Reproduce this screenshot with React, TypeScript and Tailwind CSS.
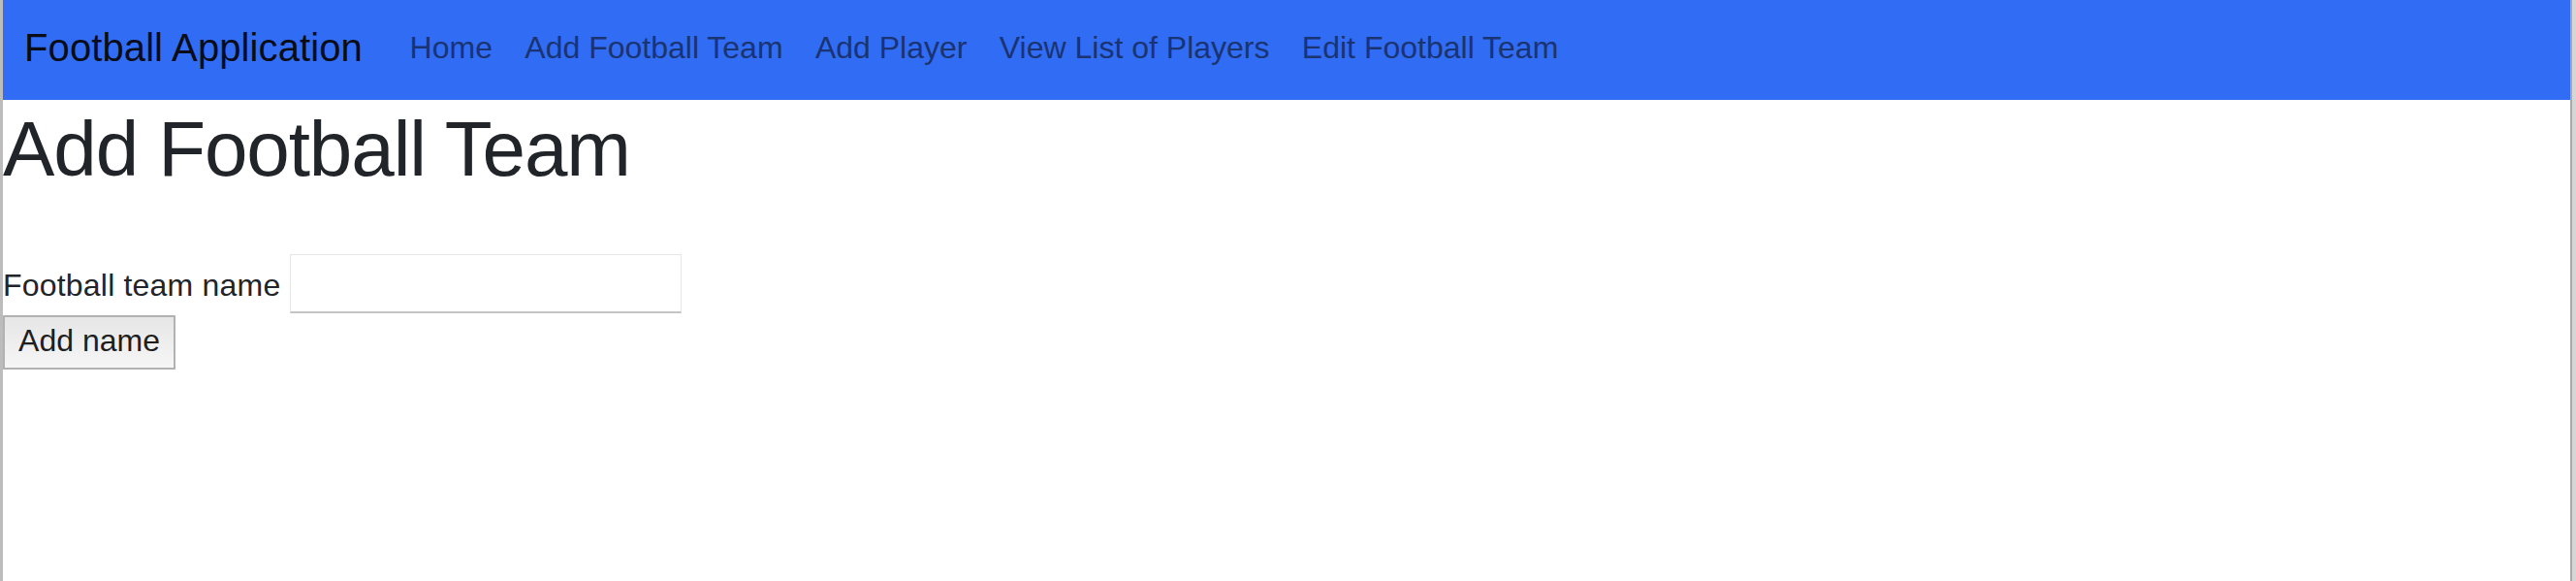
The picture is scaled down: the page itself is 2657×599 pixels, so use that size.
import { useState } from 'react'

const navLinks = ['Home', 'Add Football Team', 'Add Player', 'View List of Players', 'Edit Football Team']

function NavBar() {
  return (
    <nav className="flex h-[103px] items-center bg-[#316cf4] pb-[5px] pl-[22px]">
      <a className="mr-[32px] text-[40px] leading-none tracking-[0.1px] text-[#0a0d18]" href="#">
        Football Application
      </a>
      <ul className="flex items-center">
        {navLinks.map(link => (
          <li key={link}>
            <a className="block px-[16.7px] text-[32px] leading-none text-[#1a3371]" href="#">
              {link}
            </a>
          </li>
        ))}
      </ul>
    </nav>
  )
}

function AddTeamForm() {
  const [name, setName] = useState('')

  return (
    <form onSubmit={e => e.preventDefault()}>
      <div className="mt-[60px] flex h-[61px] items-center gap-[10px]">
        <label htmlFor="teamName" className="mt-[3px] text-[32px] leading-none tracking-[0.2px] text-[#212529]">
          Football team name
        </label>
        <input
          id="teamName"
          value={name}
          onChange={e => setName(e.target.value)}
          className="h-[61px] w-[404px] border border-[#e6e6e6] border-b-2 border-b-[#c4c4c4] bg-white px-2 text-[32px] outline-none"
        />
      </div>
      <button
        type="submit"
        className="mt-[2px] flex h-[56px] w-[178px] items-center justify-center border-2 border-[#b2b2b2] bg-gradient-to-b from-[#e6e6e6] to-[#f6f6f6] pb-1 text-[32px] leading-none text-[#1e1e1e]"
      >
        Add name
      </button>
    </form>
  )
}

export default function App() {
  return (
    <div className="flex h-[599px] w-full bg-white font-['Liberation_Sans',Arial,sans-serif]">
      <div className="w-[3px] bg-[#bcbcbc]" />
      <main className="flex-1">
        <NavBar />
        <h1 className="mt-[3px] h-[96px] text-[80px] leading-[96px] tracking-[-1.1px] text-[#212529]">
          Add Football Team
        </h1>
        <AddTeamForm />
      </main>
      <div className="w-[6px] border-l-2 border-[#a9a9a9] bg-[#d6d6d6]" />
    </div>
  )
}
